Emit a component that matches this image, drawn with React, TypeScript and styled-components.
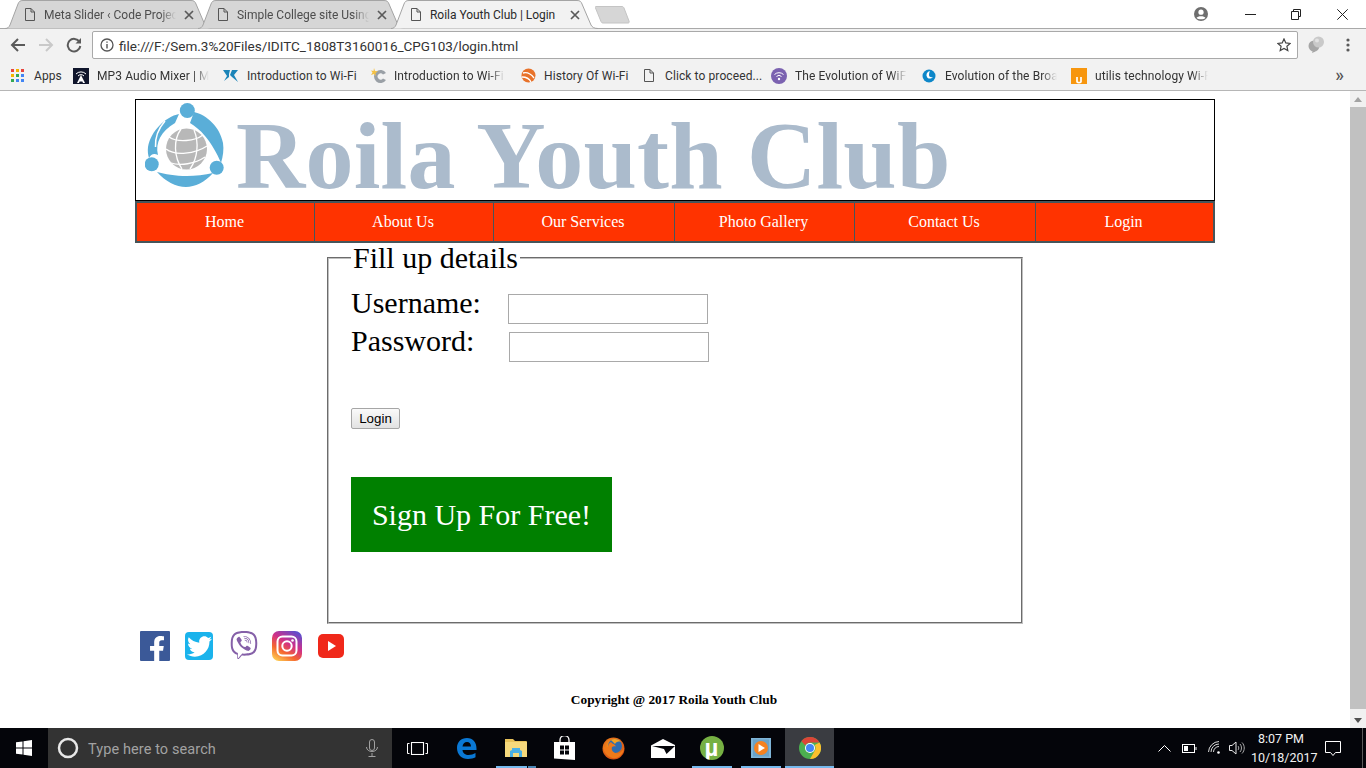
import React from "react";
import styled, { createGlobalStyle } from "styled-components";
import { FaTwitter, FaViber, FaFacebookF } from "react-icons/fa";

const Global = createGlobalStyle`
  html, body { margin: 0; padding: 0; height: 100%; overflow: hidden; background: #fff; }
  * { box-sizing: border-box; }
`;

const UI = `"Roboto", "Liberation Sans", sans-serif`;
const SERIF = `"Liberation Serif", "Times New Roman", serif`;

const Screen = styled.div`
  width: 1366px; height: 768px; display: flex; flex-direction: column; overflow: hidden; font-family: ${UI};
`;

/* ---------- tab strip ---------- */
const TabStrip = styled.div`
  height: 29px; flex: none; display: flex; align-items: flex-start; padding-left: 5px; background: #fff;
  border-bottom: 1px solid #a9a9a9; position: relative;
`;
const Tab = styled.div<{ $active?: boolean }>`
  position: relative; width: 207px; height: 29px; margin-right: -14px; flex: none;
  z-index: ${(p) => (p.$active ? 2 : 1)};
  color: ${(p) => (p.$active ? "#2a2a2a" : "#4d4d4d")};
`;
const TabShape = styled.svg`
  position: absolute; left: 0; top: 0; width: 100%; height: 29px;
`;
const TabInner = styled.div`
  position: relative; height: 28px; display: flex; align-items: center; padding: 1px 0 0 20px; font-size: 12px;
`;
const TabTitle = styled.div<{ $fade?: boolean }>`
  margin-left: 9px; width: 132px; white-space: nowrap; overflow: hidden; letter-spacing: -0.03px;
  ${(p) => p.$fade && `mask-image: linear-gradient(to right, #000 88%, transparent 100%);`}
`;
const TabClose = styled.svg`
  position: absolute; left: 179px; top: 10px; width: 10px; height: 10px;
`;
const NewTab = styled.svg`
  width: 36px; height: 18px; margin: 6px 0 0 11px; flex: none; position: relative; z-index: 0;
`;
const WindowControls = styled.div`
  margin-left: auto; display: flex; align-items: center; height: 28px; padding-right: 18px;
`;
const WinIcon = styled.svg<{ $gap: number }>`
  margin-left: ${(p) => p.$gap}px; display: block; flex: none;
`;

/* ---------- toolbar ---------- */
const Toolbar = styled.div`
  height: 34px; flex: none; background: #f2f2f2; display: flex; align-items: center; padding: 0 0 3px 10px;
`;
const NavIcon = styled.svg<{ $gap?: number }>`
  width: 16px; height: 16px; flex: none; margin-left: ${(p) => p.$gap ?? 0}px;
`;
const Omnibox = styled.div`
  width: 1206px; height: 28px; margin-left: 10px; background: #fff; border: 1px solid #a9a9a9; border-radius: 2px;
  display: flex; align-items: center; padding: 0 6px 0 7px; flex: none;
`;
const Url = styled.div`
  margin-left: 5px; padding-top: 2px; font-size: 13.5px; color: #333; flex: 1; white-space: nowrap;
`;
const ExtIcon = styled.svg`
  width: 17px; height: 17px; margin-left: 10px; flex: none;
`;
const MenuDots = styled.svg`
  width: 4px; height: 14px; margin-left: 21px; flex: none;
`;

/* ---------- bookmarks ---------- */
const BookmarkBar = styled.div`
  height: 28px; flex: none; background: #f2f2f2; border-bottom: 1px solid #b6b6b6; display: flex; align-items: center;
  padding: 0 0 2px 11px; position: relative;
`;
const Bookmark = styled.div<{ $left: number; $gap: number }>`
  display: flex; align-items: center; margin-left: ${(p) => p.$left}px; flex: none;
  > svg { margin-right: ${(p) => p.$gap}px; flex: none; }
`;
const BookmarkLabel = styled.div<{ $w: number; $fade?: boolean }>`
  width: ${(p) => p.$w}px; font-size: 12px; color: #333; white-space: nowrap; overflow: hidden; letter-spacing: 0.1px;
  ${(p) => p.$fade && `mask-image: linear-gradient(to right, #000 86%, transparent 100%);`}
`;
const Chevrons = styled.div`
  margin-left: auto; padding: 0 22px 2px 0; font-size: 18px; color: #555; line-height: 1; font-weight: 500;
`;

/* ---------- viewport ---------- */
const Body = styled.div`
  flex: 1; display: flex; min-height: 0; background: #fff;
`;
const Viewport = styled.div`
  flex: 1; padding-top: 8px; overflow: hidden; font-family: ${SERIF};
`;
const Page = styled.div`
  width: 1080px; margin: 0 auto;
`;
const Banner = styled.div`
  height: 102px; border: 1px solid #000; display: flex; align-items: flex-start; padding: 3px 0 0 9px;
`;
const Brand = styled.div`
  margin: 5px 0 0 11px; font-family: ${SERIF}; font-weight: 700; font-size: 96px; line-height: 96px;
  color: #abbbcc; white-space: nowrap; letter-spacing: 0.2px;
`;
const Nav = styled.nav`
  display: flex; height: 42px; border: 2px solid #46555a; border-bottom-width: 2px; background: #ff3300;
`;
const NavItem = styled.a<{ $w: number }>`
  width: ${(p) => p.$w}px; flex: none; display: flex; align-items: center; justify-content: center;
  color: #fff; font-size: 16px; border-right: 1px solid #46555a; padding: 0 2px 1px 0;
  &:last-child { border-right: 0; }
`;
const Fieldset = styled.fieldset`
  width: 696px; height: 383px; margin: -2px 0 0 192px; padding: 0 0 0 22px; border: 2px groove #c0c0c0;
  position: relative;
`;
const Legend = styled.legend`
  font-size: 30px; padding: 0 2px; margin-left: 0; color: #000; line-height: 34px;
`;
const FormRow = styled.div<{ $top: number }>`
  display: flex; align-items: flex-start; margin-top: ${(p) => p.$top}px; height: 30px;
`;
const Label = styled.label<{ $w: number }>`
  width: ${(p) => p.$w}px; font-size: 30px; line-height: 34px; margin-top: -8px; color: #000; flex: none;
`;
const Input = styled.input`
  width: 200px; height: 30px; border: 1px solid #a9a9a9; background: #fff; padding: 1px 2px; display: block;
`;
const Submit = styled.button`
  display: block; width: 49px; height: 21px; margin-top: 46px; padding: 0; font: 13.33px "Liberation Sans", Arial, sans-serif;
  color: #000; background: linear-gradient(#fafafa, #e2e2e2); border: 1px solid #a6a6a6; border-radius: 2px;
`;
const SignUp = styled.a`
  display: flex; align-items: center; justify-content: center; width: 261px; height: 75px; margin-top: 48px;
  background: #008000; color: #fff; font-size: 30px;
`;
const Socials = styled.div`
  display: flex; align-items: center; height: 32px; padding-left: 5px; margin-top: 6px;
`;
const SocialIcon = styled.svg<{ $gap: number }>`
  display: block; flex: none; margin-left: ${(p) => p.$gap}px;
`;
const Tile = styled.span<{ $w: number; $bg: string; $r: number; $gap: number }>`
  width: ${(p) => p.$w}px; height: ${(p) => p.$w}px; background: ${(p) => p.$bg}; border-radius: ${(p) => p.$r}px;
  margin-left: ${(p) => p.$gap}px; display: flex; align-items: center; justify-content: center; color: #fff; flex: none;
  overflow: hidden;
`;
const Viber = styled.span`
  margin-left: 17px; width: 28px; height: 30px; color: #8560a8; flex: none; display: flex;
`;
const Copyright = styled.div`
  margin-top: 30px; padding-right: 2px; text-align: center; font-weight: 700; font-size: 13.33px; line-height: 16px; color: #000;
`;

/* ---------- scrollbar ---------- */
const Scrollbar = styled.div`
  width: 16px; flex: none; background: #f1f1f1; display: flex; flex-direction: column; align-items: center;
`;
const ScrollBtn = styled.div`
  height: 16px; flex: none; display: flex; align-items: center; justify-content: center; color: #a3a3a3;
`;
const ScrollThumb = styled.div`
  flex: 1; width: 100%; background: #c1c1c1; margin-bottom: 3px;
`;

/* ---------- taskbar ---------- */
const Taskbar = styled.div`
  height: 40px; flex: none; background: #04050a; display: flex; align-items: stretch; color: #fff; position: relative;
`;
const StartBtn = styled.div`
  width: 48px; display: flex; align-items: center; justify-content: center; flex: none;
`;
const SearchBox = styled.div`
  width: 344px; background: #333; display: flex; align-items: center; padding: 0 14px 0 9px; flex: none;
`;
const SearchText = styled.div`
  margin-left: 9px; flex: 1; color: #a2a2a2; font-size: 14.5px; letter-spacing: 0.1px; padding-top: 2px;
`;
const TaskView = styled.div`
  width: 50px; display: flex; align-items: center; justify-content: center; flex: none;
`;
const TaskBtn = styled.div<{ $running?: boolean; $active?: boolean; $stack?: boolean }>`
  width: 49px; flex: none; display: flex; align-items: center; justify-content: center; position: relative;
  background: ${(p) => (p.$active ? "#3a3c41" : "transparent")};
  ${(p) =>
    p.$running &&
    `&::after { content: ""; position: absolute; left: ${p.$active ? 0 : 5}px; right: ${p.$active ? 0 : 4}px; bottom: 0; height: 2px;
      background: ${p.$stack ? "linear-gradient(to right, #76b9ed 31px, #04050a 31px, #04050a 32px, #4a86b5 32px)" : "#76b9ed"}; }`}
`;
const Tray = styled.div`
  margin-left: auto; display: flex; align-items: center; flex: none;
`;
const TrayIcon = styled.svg<{ $gap: number }>`
  margin-left: ${(p) => p.$gap}px; flex: none; display: block;
`;
const Clock = styled.div`
  width: 60px; margin-left: 6px; text-align: center; font-size: 12.5px; line-height: 19px; color: #f2f2f2; flex: none;
`;
const TrayEnd = styled.div`
  width: 25px; align-self: stretch; flex: none; padding-left: 21px;
  &::before { content: ""; display: block; width: 1px; height: 100%; background: #5a5a5a; }
`;
const Mu = styled.span`
  font: 700 24px/1 "Liberation Sans", Arial, sans-serif; color: #fff;
`;
const TorrentDisc = styled.div`
  width: 24px; height: 24px; border-radius: 50%; background: #76b043; display: flex; align-items: center;
  justify-content: center; overflow: hidden;
`;

/* ---------- drawings ---------- */
const PageGlyph = () => (
  <svg width="10" height="13" viewBox="0 0 10 13" fill="none" stroke="#555" strokeWidth="1" style={{ flex: "none" }}>
    <path d="M.5.5h5.5l3.5 3.5v8.5h-9zM6 .5V4h3.5" />
  </svg>
);
const TabOutline = ({ active }: { active?: boolean }) => (
  <TabShape viewBox="0 0 207 29" preserveAspectRatio="none">
    <path
      d="M0 28.5 C3 28.5 4 27 5 25 L13 4 C14 1.5 15 .5 18 .5 H186 C189 .5 190 1.5 191 4 L200 25 C201 27 203 28.5 207 28.5"
      fill={active ? "#f2f2f2" : "#d6d6d6"}
      stroke="#a4a4a4"
    />
  </TabShape>
);
const CloseX = () => (
  <TabClose viewBox="0 0 10 10">
    <path d="M1 1l8 8M9 1l-8 8" stroke="#5a5a5a" strokeWidth="1.7" />
  </TabClose>
);

const AppsIcon = () => {
  const c = ["#e8453c", "#f4b400", "#e8453c", "#f4b400", "#34a853", "#4285f4", "#34a853", "#4285f4", "#4285f4"];
  return (
    <svg width="13" height="13" viewBox="0 0 13 13">
      {c.map((f, i) => (
        <rect key={i} x={(i % 3) * 5} y={Math.floor(i / 3) * 5} width="3" height="3" fill={f} />
      ))}
    </svg>
  );
};
const MixerIcon = () => (
  <svg width="16" height="16" viewBox="0 0 16 16">
    <rect width="16" height="16" fill="#10162c" />
    <path d="M3 6a7 7 0 0 1 10 0M5 8a4 4 0 0 1 6 0" stroke="#fff" fill="none" />
    <path d="M8 7l4 8h-2l-.6-1.5H6.6L6 15H4z" fill="#fff" />
  </svg>
);
const SkIcon = () => (
  <svg width="17" height="16" viewBox="0 0 17 16">
    <path d="M8 2H1l4 6-3 5 5-4 0-3zM16 2H10L8 7l2 2 6 5-4-7z" fill="#1b84b8" />
  </svg>
);
const CIcon = () => (
  <svg width="16" height="16" viewBox="0 0 16 16">
    <path d="M15 5a6.500 6.500 0 1 0 0 7l-3-1.600a3 3 0 1 1 0-3.800z" fill="#9aa0a6" />
    <path d="M3 0l1 3 3 .5-2.500 1.500.5 3-2-2-3 1 1.500-2.500L0 2.500 2.500 3z" fill="#f5c243" />
  </svg>
);
const HistoryIcon = () => (
  <svg width="15" height="15" viewBox="0 0 15 15">
    <circle cx="7.500" cy="7.500" r="7" fill="#e8722a" />
    <path d="M2 5c4-1 8 1 11 5M1 9c4 0 7 1 9 5" stroke="#fff" strokeWidth="1.300" fill="none" />
  </svg>
);
const ViberFav = () => (
  <svg width="16" height="16" viewBox="0 0 16 16">
    <circle cx="8" cy="8" r="8" fill="#7b62b0" />
    <path d="M3.500 6.500a6.500 6.500 0 0 1 9 0M5.500 8.500a3.500 3.500 0 0 1 5 0" stroke="#fff" fill="none" />
    <circle cx="8" cy="11" r="1.200" fill="#fff" />
  </svg>
);
const BroadIcon = () => (
  <svg width="16" height="16" viewBox="0 0 16 16">
    <circle cx="8" cy="8" r="6.500" fill="#0d87c9" />
    <path d="M9 3a4 4 0 0 0-3 6c1 2 4 2 6 0-2 .5-4 0-4-2 0-1.500 .5-3 1-4z" fill="#fff" />
  </svg>
);
const UtilisIcon = () => (
  <svg width="16" height="16" viewBox="0 0 16 16">
    <rect width="16" height="16" fill="#f7960e" />
    <path d="M6 9v4.500c0 1.500 4 1.500 4 0V9" stroke="#fff" strokeWidth="1.700" fill="none" />
  </svg>
);

const Logo = () => (
  <svg width="80" height="84" viewBox="0 0 80 84" style={{ flex: "none" }}>
    <g fill="#5aaed8">
      <path d="M49 9 C62 12 75 24 78 40 C79 47 78 53 76 60 C72 50 66 40 60 33 C55 27 50 23 45 20 Z" />
      <path d="M34 11 C20 14 6 28 3 44 C2.500 48 3 52 4 55 C6 51 9 50 13 52 C10 40 16 28 30 20 Z" />
      <path d="M12 69 C20 71 30 73 42 73 C50 73 60 72 68 70 C60 79 50 84 41 84 C31 84 20 78 12 69 Z" />
      <circle cx="42.300" cy="7.500" r="7.500" />
      <circle cx="6.700" cy="61.300" r="7" />
      <circle cx="71.700" cy="64.700" r="7" />
    </g>
    <path d="M20 18 C13 26 10 35 10.500 44" fill="none" stroke="#fff" strokeWidth="1.500" />
    <circle cx="41.500" cy="46" r="20.500" fill="#b8b8b8" />
    <g fill="none" stroke="#fff" strokeWidth="1.300">
      <path d="M24 34 C33 40 50 38 58 32" />
      <path d="M21 46 C30 53 50 51 62 43" />
      <path d="M26 60 C35 63 50 61 60 54" />
      <path d="M36 26 C28 37 29 54 37 66" />
      <path d="M49 27 C54 39 53 55 45 66" />
    </g>
  </svg>
);

const Taskview = () => (
  <svg width="21" height="13" viewBox="0 0 21 13" fill="none" stroke="#fff">
    <rect x="4.500" y=".5" width="12" height="12" strokeWidth="1.100" />
    <path d="M2.500 1.500H.5v10h2M18.500 1.500h2v10h-2" />
  </svg>
);
const WinLogo = () => (
  <svg width="16" height="16" viewBox="0 0 16 16" fill="#fff">
    <path d="M0 2.300 6.500 1.400V7.500H0zM7.500 1.300 16 0V7.500H7.500zM0 8.500H6.500V14.600L0 13.700zM7.500 8.500H16V16L7.500 14.700z" />
  </svg>
);
const Edge = () => (
  <svg width="21" height="22" viewBox="0 0 21 22">
    <path
      d="M1 11C1 5 5 1 11 1c6 0 9.500 4.500 9.500 10.500V13H6.500c.3 3.500 3 5 6 5 2.500 0 5-.8 7-2v4.300c-2 1-4.500 1.700-7.500 1.700C5.500 22 1 17.500 1 11zM6.500 9.500h8.500c0-2.500-1.500-4.500-4-4.500S6.800 7 6.500 9.500z"
      fill="#0a78d4"
    />
  </svg>
);
const Folder = () => (
  <svg width="22" height="20" viewBox="0 0 22 20">
    <path d="M0 1h8l2 2h11a1 1 0 0 1 1 1v3H0z" fill="#e8c25a" />
    <rect y="4" width="22" height="15" fill="#f6d97c" />
    <path d="M7 10h8v2l2 1v6h-3v-4H8v4H5v-6l2-1z" fill="#4ab0e6" />
  </svg>
);
const Store = () => (
  <svg width="21" height="24" viewBox="0 0 21 24">
    <path d="M6 6V4a4.500 4.500 0 0 1 9 0v2" stroke="#fff" fill="none" strokeWidth="1.300" />
    <path d="M0 6h21v18L0 22.500z" fill="#fff" />
    <path d="M6 9.500h4v4H6zM11 9.500h4v4h-4zM6 14.500h4v4H6zM11 14.500h4v4h-4z" fill="#04050a" />
  </svg>
);
const Firefox = () => (
  <svg width="23" height="23" viewBox="0 0 23 23">
    <defs>
      <radialGradient id="ffx" cx="0.45" cy="0.4" r="0.65">
        <stop offset="0" stopColor="#f9a825" />
        <stop offset="1" stopColor="#d6470f" />
      </radialGradient>
    </defs>
    <circle cx="11.500" cy="11.500" r="11" fill="url(#ffx)" />
    <circle cx="13" cy="9" r="7" fill="#2f6cb0" />
    <path d="M1 9C1.500 17 8 22 14 21c5-1 8-6 8-11-1 4-5 8-9 6-2-1-4-3-3-6 1-1 3-1 4-.5C13 7 10 7 9 5 7 6 6 8 6 10 4 10 2 10 1 9z" fill="#ef7a1a" />
    <path d="M9 3c3-2 8-1 10 2-3-1-5 0-6 2z" fill="#f4a322" />
  </svg>
);
const Mail = () => (
  <svg width="24" height="19" viewBox="0 0 24 19">
    <path d="M0 6.500 12 0 24 6V19H0z" fill="#fff" />
    <path d="M1 7H24L15.500 15 13 10z" fill="#04050a" />
  </svg>
);
const Media = () => (
  <svg width="20" height="20" viewBox="0 0 20 20">
    <rect width="20" height="20" fill="#7fb5d8" />
    <rect x="2" y="1.500" width="16" height="17" fill="#4a88b0" opacity=".4" />
    <circle cx="10" cy="10" r="7" fill="#f58220" />
    <path d="M7.500 6l6.500 4-6.500 4z" fill="#fff" />
  </svg>
);
const Chrome = () => (
  <svg width="22" height="22" viewBox="0 0 22 22">
    <circle cx="11" cy="11" r="11" fill="#4caf50" />
    <path d="M11 0a11 11 0 0 1 9.530 5.500H11A5.500 5.500 0 0 0 6.200 8.300L2.400 4.200A11 11 0 0 1 11 0z" fill="#dc4437" />
    <path d="M20.530 5.500A11 11 0 0 1 11 22l4.700-8.200A5.500 5.500 0 0 0 15.700 8z" fill="#fbc02d" />
    <circle cx="11" cy="11" r="5" fill="#fff" />
    <circle cx="11" cy="11" r="4" fill="#4285f4" />
  </svg>
);

const bookmarks: { label: string; w: number; left: number; gap: number; fade?: boolean; icon: React.ReactNode }[] = [
  { label: "Apps", w: 28, left: 0, gap: 10, icon: <AppsIcon /> },
  { label: "MP3 Audio Mixer | M", w: 112, left: 11, gap: 8, fade: true, icon: <MixerIcon /> },
  { label: "Introduction to Wi-Fi", w: 111, left: 13, gap: 8, icon: <SkIcon /> },
  { label: "Introduction to Wi-Fi", w: 111, left: 13, gap: 7, fade: true, icon: <CIcon /> },
  { label: "History Of Wi-Fi", w: 85, left: 16, gap: 8, icon: <HistoryIcon /> },
  { label: "Click to proceed...", w: 97, left: 15, gap: 11, icon: <PageGlyph /> },
  { label: "The Evolution of WiFi", w: 112, left: 9, gap: 8, fade: true, icon: <ViberFav /> },
  { label: "Evolution of the Broa", w: 112, left: 14, gap: 8, fade: true, icon: <BroadIcon /> },
  { label: "utilis technology Wi-F", w: 113, left: 14, gap: 8, fade: true, icon: <UtilisIcon /> },
];

const navItems = [
  { label: "Home", w: 178 },
  { label: "About Us", w: 179 },
  { label: "Our Services", w: 181 },
  { label: "Photo Gallery", w: 180 },
  { label: "Contact Us", w: 181 },
  { label: "Login", w: 177 },
];

export default function App() {
  return (
    <Screen>
      <Global />
      <TabStrip>
        <Tab>
          <TabOutline />
          <TabInner>
            <PageGlyph />
            <TabTitle $fade>Meta Slider ‹ Code Project</TabTitle>
            <CloseX />
          </TabInner>
        </Tab>
        <Tab>
          <TabOutline />
          <TabInner>
            <PageGlyph />
            <TabTitle $fade>Simple College site Using</TabTitle>
            <CloseX />
          </TabInner>
        </Tab>
        <Tab $active>
          <TabOutline active />
          <TabInner>
            <PageGlyph />
            <TabTitle>Roila Youth Club | Login</TabTitle>
            <CloseX />
          </TabInner>
        </Tab>
        <NewTab viewBox="0 0 36 18">
          <path d="M1 .5h26c1 0 1.500.5 2 1.500l5 13c.5 1.500 0 2-1 2H8c-1 0-1.500-.5-2-1.500L.5 2C0 1 .3.500 1 .5z" fill="#d6d6d6" stroke="#c4c4c4" />
        </NewTab>
        <WindowControls>
          <WinIcon $gap={0} width="14" height="14" viewBox="0 0 14 14">
            <circle cx="7" cy="7" r="7" fill="#6e6e6e" />
            <circle cx="7" cy="5.200" r="2.600" fill="#fff" />
            <path d="M2.500 11c1-2.300 8-2.300 9 0-1.500 1.700-7.500 1.700-9 0z" fill="#fff" />
          </WinIcon>
          <WinIcon $gap={37} width="11" height="11" viewBox="0 0 11 11">
            <path d="M0 5.500h11" stroke="#222" />
          </WinIcon>
          <WinIcon $gap={35} width="10" height="11" viewBox="0 0 10 11" fill="none" stroke="#222">
            <path d="M2.500 2.500v-2h7v7h-2M.5 2.500h7v8h-7z" />
          </WinIcon>
          <WinIcon $gap={36} width="11" height="11" viewBox="0 0 11 11">
            <path d="M.3.300l10.400 10.400M10.700.300L.3 10.700" stroke="#222" />
          </WinIcon>
        </WindowControls>
      </TabStrip>

      <Toolbar>
        <NavIcon viewBox="0 0 16 16" fill="none" stroke="#5a5a5a" strokeWidth="2">
          <path d="M15 8H2M8 2 2 8l6 6" />
        </NavIcon>
        <NavIcon $gap={12} viewBox="0 0 16 16" fill="none" stroke="#c9c9c9" strokeWidth="2">
          <path d="M1 8h13M8 2l6 6-6 6" />
        </NavIcon>
        <NavIcon $gap={12} viewBox="0 0 16 16" fill="none" stroke="#5a5a5a" strokeWidth="2">
          <path d="M13.500 5A6.300 6.300 0 1 0 14.300 9" />
          <path d="M15 1v5.500H9.500z" fill="#5a5a5a" stroke="none" />
        </NavIcon>
        <Omnibox>
          <svg width="14" height="14" viewBox="0 0 14 14" fill="none" style={{ flex: "none" }}>
            <circle cx="7" cy="7" r="6" stroke="#555" strokeWidth="1.300" />
            <path d="M7 6v4.500M7 3.500v1.300" stroke="#555" strokeWidth="1.400" />
          </svg>
          <Url>file:///F:/Sem.3%20Files/IDITC_1808T3160016_CPG103/login.html</Url>
          <svg width="14" height="14" viewBox="0 0 14 14" fill="none" style={{ flex: "none" }}>
            <path d="M7 .9l1.800 4 4.400.5-3.300 2.900.9 4.300L7 10.400l-3.800 2.200.9-4.300L.8 5.400l4.400-.5z" stroke="#444" strokeWidth="1.200" />
          </svg>
        </Omnibox>
        <ExtIcon viewBox="0 0 17 17">
          <path d="M5 14l-1 3 3.500-1.500z" fill="#a8a8a8" />
          <circle cx="6" cy="10" r="5.500" fill="#a6a6a6" />
          <circle cx="10.500" cy="6" r="5.500" fill="#c9c9c9" />
          <circle cx="9" cy="4.500" r="2" fill="#e2e2e2" />
        </ExtIcon>
        <MenuDots viewBox="0 0 4 14">
          <circle cx="2" cy="2" r="1.600" fill="#5a5a5a" />
          <circle cx="2" cy="7" r="1.600" fill="#5a5a5a" />
          <circle cx="2" cy="12" r="1.600" fill="#5a5a5a" />
        </MenuDots>
      </Toolbar>

      <BookmarkBar>
        {bookmarks.map((b, i) => (
          <Bookmark key={i} $left={b.left} $gap={b.gap}>
            {b.icon}
            <BookmarkLabel $w={b.w} $fade={b.fade}>{b.label}</BookmarkLabel>
          </Bookmark>
        ))}
        <Chevrons>»</Chevrons>
      </BookmarkBar>

      <Body>
        <Viewport>
          <Page>
            <Banner>
              <Logo />
              <Brand>Roila Youth Club</Brand>
            </Banner>
            <Nav>
              {navItems.map((n) => (
                <NavItem key={n.label} $w={n.w}>{n.label}</NavItem>
              ))}
            </Nav>
            <Fieldset>
              <Legend>Fill up details</Legend>
              <FormRow $top={19}>
                <Label $w={157}>Username:</Label>
                <Input type="text" />
              </FormRow>
              <FormRow $top={8}>
                <Label $w={158}>Password:</Label>
                <Input type="password" />
              </FormRow>
              <Submit type="button">Login</Submit>
              <SignUp>Sign Up For Free!</SignUp>
            </Fieldset>
            <Socials>
              <Tile $w={30} $bg="#3b5998" $r={1} $gap={0}>
                <FaFacebookF size={26} style={{ marginTop: 6, marginLeft: 3 }} />
              </Tile>
              <Tile $w={28} $bg="#1ab3ec" $r={4} $gap={15}>
                <FaTwitter size={25} />
              </Tile>
              <Viber>
                <FaViber size={28} />
              </Viber>
              <SocialIcon $gap={14} width="30" height="30" viewBox="0 0 30 30">
                <defs>
                  <linearGradient id="ig" x1="0.2" y1="1" x2="0.8" y2="0">
                    <stop offset="0" stopColor="#fdc74f" />
                    <stop offset="0.3" stopColor="#f5652f" />
                    <stop offset="0.6" stopColor="#cf2f8a" />
                    <stop offset="1" stopColor="#5a4fcf" />
                  </linearGradient>
                </defs>
                <rect width="30" height="30" rx="7" fill="url(#ig)" />
                <rect x="5.500" y="5.500" width="19" height="19" rx="5" fill="none" stroke="#fff" strokeWidth="2" />
                <circle cx="15" cy="15" r="4.700" fill="none" stroke="#fff" strokeWidth="2" />
                <circle cx="20.500" cy="9.500" r="1.300" fill="#fff" />
              </SocialIcon>
              <SocialIcon $gap={16} width="26" height="26" viewBox="0 0 26 26">
                <rect width="26" height="24" y="1" rx="5" fill="#f0281a" />
                <path d="M10 8l8 5-8 5z" fill="#fff" />
              </SocialIcon>
            </Socials>
            <Copyright>Copyright @ 2017 Roila Youth Club</Copyright>
          </Page>
        </Viewport>
        <Scrollbar>
          <ScrollBtn>
            <svg width="8" height="5" viewBox="0 0 8 5"><path d="M4 0l4 5H0z" fill="currentColor" /></svg>
          </ScrollBtn>
          <ScrollThumb />
          <ScrollBtn>
            <svg width="8" height="5" viewBox="0 0 8 5"><path d="M4 5l4-5H0z" fill="#505050" /></svg>
          </ScrollBtn>
        </Scrollbar>
      </Body>

      <Taskbar>
        <StartBtn><WinLogo /></StartBtn>
        <SearchBox>
          <svg width="22" height="22" viewBox="0 0 22 22" fill="none" style={{ flex: "none" }}>
            <circle cx="11" cy="11" r="9" stroke="#e8e8e8" strokeWidth="2.500" />
          </svg>
          <SearchText>Type here to search</SearchText>
          <svg width="12" height="18" viewBox="0 0 12 18" fill="none" stroke="#a2a2a2" style={{ flex: "none" }}>
            <rect x="3.500" y=".5" width="5" height="11" rx="2.500" />
            <path d="M.5 8c0 6 11 6 11 0M6 14v3.500M2.500 17.500h7" />
          </svg>
        </SearchBox>
        <TaskView><Taskview /></TaskView>
        <TaskBtn><Edge /></TaskBtn>
        <TaskBtn $running $stack><Folder /></TaskBtn>
        <TaskBtn><Store /></TaskBtn>
        <TaskBtn><Firefox /></TaskBtn>
        <TaskBtn><Mail /></TaskBtn>
        <TaskBtn $running><TorrentDisc><Mu>µ</Mu></TorrentDisc></TaskBtn>
        <TaskBtn $running><Media /></TaskBtn>
        <TaskBtn $running $active><Chrome /></TaskBtn>
        <Tray>
          <TrayIcon $gap={0} width="13" height="8" viewBox="0 0 13 8" fill="none" stroke="#fff">
            <path d="M.5 7.500 6.500 1.500l6 6" />
          </TrayIcon>
          <TrayIcon $gap={11} width="15" height="9" viewBox="0 0 15 9" fill="none" stroke="#fff">
            <rect x=".5" y=".5" width="12" height="8" />
            <rect x="2" y="2" width="4" height="5" fill="#fff" stroke="none" />
            <path d="M14 3v3" />
          </TrayIcon>
          <TrayIcon $gap={11} width="14" height="14" viewBox="0 0 14 14" fill="none" stroke="#d8d8d8">
            <path d="M.5 11A11 11 0 0 1 11 .5M3 11a8 8 0 0 1 8-8M5.500 11A5.500 5.500 0 0 1 11 5.500" />
            <circle cx="10.500" cy="11.500" r="1.300" fill="#fff" stroke="none" />
          </TrayIcon>
          <TrayIcon $gap={7} width="16" height="14" viewBox="0 0 16 14" fill="none" stroke="#e8e8e8">
            <path d="M.5 4.500h2.500L7 1v12L3 9.500H.5z" />
            <path d="M9 5c1 1 1 3 0 4M11 3c2 2 2 6 0 8M13 1.500c3 3 3 8 0 11" stroke="#aaa" />
          </TrayIcon>
          <Clock>8:07 PM<br />10/18/2017</Clock>
          <TrayIcon $gap={14} width="16" height="15" viewBox="0 0 16 15" fill="none" stroke="#fff">
            <path d="M.5.5h15v11h-5l-2.500 3-2.500-3h-5z" />
          </TrayIcon>
          <TrayEnd />
        </Tray>
      </Taskbar>
    </Screen>
  );
}
